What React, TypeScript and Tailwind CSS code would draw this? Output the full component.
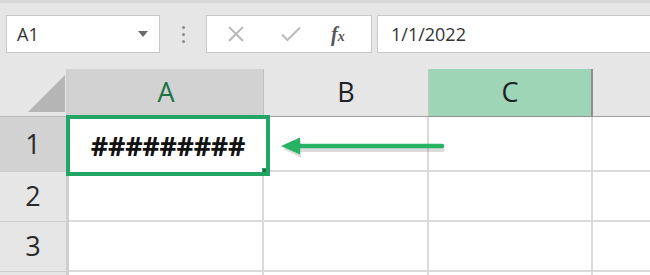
import React from "react";

const font = { fontFamily: '"Open Sans", "Noto Sans", sans-serif' };

function Toolbar() {
  return (
    <div className="h-[69px] bg-[#e6e6e6] flex items-start pt-[15px] border-t-[3px] border-[#d9d9d9]">
      {/* Name box */}
      <div className="ml-[6px] w-[154px] h-[38px] bg-white border border-[#c8c8c8] flex items-center justify-between pl-[10px] pr-[11px] mt-[-3px]">
        <span className="text-[18px] text-[#333]">A1</span>
        <svg width="10" height="6" viewBox="0 0 10 6">
          <path d="M0 0h10L5 6z" fill="#6b6b6b" />
        </svg>
      </div>
      <div className="w-[46px] h-[38px] mt-[-3px] flex flex-col items-center justify-center gap-[4px]">
        <span className="w-[3px] h-[3px] rounded-full bg-[#8a8a8a]" />
        <span className="w-[3px] h-[3px] rounded-full bg-[#8a8a8a]" />
        <span className="w-[3px] h-[3px] rounded-full bg-[#8a8a8a]" />
      </div>
      {/* Cancel / Enter / fx */}
      <div className="w-[166px] h-[38px] mt-[-3px] bg-white border border-[#c8c8c8] flex items-center">
        <svg className="ml-[21px]" width="16" height="16" viewBox="0 0 16 16">
          <path d="M1 1l14 14M15 1L1 15" stroke="#b9b9b9" strokeWidth="1.8" />
        </svg>
        <svg className="ml-[37px]" width="20" height="16" viewBox="0 0 20 16">
          <path d="M1 8.5l5.5 5.5L19 1.5" stroke="#bdbdbd" strokeWidth="2.2" fill="none" />
        </svg>
        <span
          className="ml-[30px] text-[20px] italic font-bold text-[#555] leading-none"
          style={{ fontFamily: '"Liberation Serif", serif' }}
        >
          f<span className="text-[14px]">x</span>
        </span>
      </div>
      {/* Formula bar */}
      <div className="ml-[5px] flex-1 h-[38px] mt-[-3px] bg-white border border-[#c8c8c8] border-r-0 flex items-center pl-[13px]">
        <span className="text-[18px] text-[#333]">1/1/2022</span>
      </div>
    </div>
  );
}

const rowCls = "h-full flex items-center justify-center text-[27px]";

export default function App() {
  return (
    <div className="w-[650px] h-[275px] overflow-hidden bg-white relative" style={font}>
      <Toolbar />
      <div className="grid grid-cols-[69px_195px_165px_164px_1fr] grid-rows-[48px_55px_50px_50px_20px]">
        {/* header row */}
        <div className="bg-[#e6e6e6] border-r-[3px] border-[#cfcfcf] border-b border-b-[#bdbdbd] flex items-end justify-end pb-[4px] pr-[1px]">
          <svg width="37" height="37" viewBox="0 0 37 37">
            <path d="M37 0V37H0z" fill="#b5b5b5" />
          </svg>
        </div>
        <div className={`${rowCls} bg-[#d2d2d2] text-[#217346] border-r border-[#c0c0c0] border-b-2 border-b-[#217346]`}>A</div>
        <div className={`${rowCls} bg-[#e6e6e6] text-[#222] border-r border-[#c6c6c6] border-b border-b-[#9f9f9f]`}>B</div>
        <div className={`${rowCls} bg-[#9fd5b7] text-[#222] border-r-2 border-[#8f8f8f] border-b border-b-[#8f8f8f]`}>C</div>
        <div className="bg-[#e6e6e6] border-b border-b-[#9f9f9f]" />

        {[1, 2, 3, 4].map((r) => (
          <React.Fragment key={r}>
            <div
              className={`${rowCls} ${r === 1 ? "bg-[#d2d2d2]" : "bg-[#e6e6e6]"} text-[#2b2b2b] border-r-[3px] border-[#cfcfcf] border-b border-b-[#cfcfcf]`}
            >
              {r < 4 ? r : ""}
            </div>
            <div className="border-r-2 border-b-2 border-[#dadada]" />
            <div className="border-r-2 border-b-2 border-[#dadada]" />
            <div className="border-r-2 border-b-2 border-[#dadada]" />
            <div className="border-b-2 border-[#dadada]" />
          </React.Fragment>
        ))}
      </div>

      {/* selected cell A1 */}
      <div className="absolute left-[66px] top-[115px] w-[204px] h-[61px] border-[4px] border-[#22a565] bg-white flex items-center justify-center">
        <span className="text-[27px] font-bold text-[#111] tracking-[-0.3px] leading-none">#########</span>
        <div className="absolute right-[-1px] bottom-[-1px] w-[5px] h-[5px] bg-[#1e6f43] border border-[#22a565]" />
      </div>

      {/* arrow */}
      <svg className="absolute left-[276px] top-[132px]" width="175" height="30" viewBox="0 0 175 30">
        <path d="M18 15.5H165" stroke="#9a9a9a" strokeOpacity="0.35" strokeWidth="5" strokeLinecap="round" transform="translate(1 2)" />
        <path d="M6 15L24 6.5V23.5z" fill="#9a9a9a" fillOpacity="0.35" transform="translate(1 2)" />
        <path d="M18 14H166" stroke="#27b264" strokeWidth="4.5" strokeLinecap="round" />
        <path d="M5 14L24 5.5V22.5z" fill="#27b264" />
      </svg>
    </div>
  );
}
